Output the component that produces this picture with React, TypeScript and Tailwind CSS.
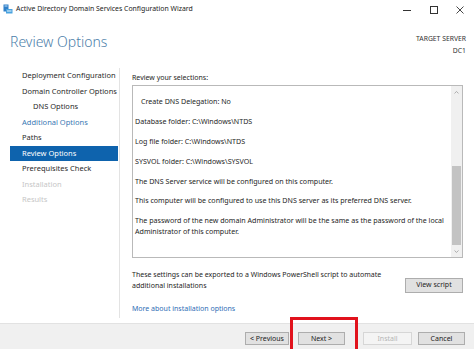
import React from "react";

const navItems = [
  { label: "Deployment Configuration", tone: "normal" },
  { label: "Domain Controller Options", tone: "normal" },
  { label: "DNS Options", tone: "normal", indent: true },
  { label: "Additional Options", tone: "link" },
  { label: "Paths", tone: "normal" },
  { label: "Review Options", tone: "active" },
  { label: "Prerequisites Check", tone: "normal" },
  { label: "Installation", tone: "disabled" },
  { label: "Results", tone: "disabled" },
];

const summary = [
  " Create DNS Delegation: No",
  "Database folder: C:\\Windows\\NTDS",
  "Log file folder: C:\\Windows\\NTDS",
  "SYSVOL folder: C:\\Windows\\SYSVOL",
  "The DNS Server service will be configured on this computer.",
  "This computer will be configured to use this DNS server as its preferred DNS server.",
  "The password of the new domain Administrator will be the same as the password of the local Administrator of this computer.",
];

function WizardIcon() {
  return (
    <svg width="10" height="10" viewBox="0 0 10 10">
      <rect x="0.5" y="0.5" width="5" height="7" fill="#2f7fc8" />
      <rect x="1.5" y="1.5" width="3" height="1" fill="#bfe0f7" />
      <rect x="3" y="5" width="6.5" height="4.5" fill="#4aa3df" />
      <rect x="4" y="6.5" width="4.5" height="1" fill="#e8f4fc" />
    </svg>
  );
}

function WinControls() {
  return (
    <div className="flex items-center h-full pr-[2px]">
      <div className="w-[27px] flex justify-center">
        <svg width="8" height="8" viewBox="0 0 8 8">
          <path d="M0 4.5h8" stroke="#333" strokeWidth="1" />
        </svg>
      </div>
      <div className="w-[28px] flex justify-center">
        <svg width="8" height="8" viewBox="0 0 8 8">
          <rect x="0.5" y="0.5" width="7" height="7" fill="none" stroke="#333" strokeWidth="1" />
        </svg>
      </div>
      <div className="w-[24px] flex justify-center">
        <svg width="8" height="8" viewBox="0 0 8 8">
          <path d="M0.5 0.5l7 7M7.5 0.5l-7 7" stroke="#333" strokeWidth="0.9" />
        </svg>
      </div>
    </div>
  );
}

function Btn({ label, disabled, className = "" }: { label: string; disabled?: boolean; className?: string }) {
  return (
    <div
      className={`h-[13px] flex items-center justify-center border text-[7px] leading-none ${
        disabled ? "border-[#d6d6d6] bg-[#f4f4f4] text-[#b4b4b4]" : "border-[#adadad] bg-[#e1e1e1] text-[#222]"
      } ${className}`}
    >
      {label}
    </div>
  );
}

export default function App() {
  return (
    <div
      className="relative w-[474px] h-[349px] bg-white overflow-hidden flex flex-col text-[#1e1e1e]"
      style={{ fontFamily: '"Noto Sans", "Open Sans", sans-serif' }}
    >
      {/* title bar */}
      <div className="h-[19px] flex items-center justify-between pl-[3px] pr-0">
        <div className="flex items-center gap-[3px]">
          <WizardIcon />
          <span className="text-[6.9px] text-[#222]">Active Directory Domain Services Configuration Wizard</span>
        </div>
        <WinControls />
      </div>

      {/* header */}
      <div className="h-[49px] flex justify-between pl-[10px] pr-[8px]">
        <div className="text-[14px] font-light text-[#4d80aa] pt-[13px] leading-[20px]">Review Options</div>
        <div className="pt-[14px] text-right text-[6.8px] leading-[12px] text-[#333]">
          <div>TARGET SERVER</div>
          <div>DC1</div>
        </div>
      </div>

      {/* main */}
      <div className="h-[255px] flex">
        <div className="w-[120px] border-r border-[#e3e3e3] pl-[10px] pr-[1px] mb-[5px]">
          {navItems.map((it) => (
            <div
              key={it.label}
              className={`h-[15.5px] flex items-center text-[7.5px] ${it.indent ? "pl-[23px]" : "pl-[12px]"} ${
                it.tone === "active"
                  ? "bg-[#0e63ad] text-white"
                  : it.tone === "link"
                  ? "text-[#3a78b4]"
                  : it.tone === "disabled"
                  ? "text-[#c6c6c6]"
                  : "text-[#2a2a2a]"
              }`}
            >
              {it.label}
            </div>
          ))}
        </div>

        <div className="flex-1 pl-[12px] pr-[11px] pt-[2px] flex flex-col">
          <div className="h-[12px] text-[7px] leading-[12px] mt-[2px]">Review your selections:</div>
          <div className="h-[173px] mt-[1px] border border-[#b9b9b9] flex">
            <div className="flex-1 pl-[2px] pt-[10px] text-[7.1px] leading-[10.5px] flex flex-col gap-[9.4px]">
              {summary.map((s) => (
                <div key={s} className={s.startsWith(" ") ? "pl-[6px]" : ""}>
                  {s.trim()}
                </div>
              ))}
            </div>
            <div className="w-[11px] bg-[#f0f0f0] flex flex-col items-center">
              <svg width="7" height="11" viewBox="0 0 7 11" className="mt-[1px]">
                <path d="M1.5 6.5l2-2 2 2" fill="none" stroke="#9a9a9a" strokeWidth="0.8" />
              </svg>
              <div className="mt-[68px] w-[9px] h-[80px] bg-[#c3c3c3]" />
              <svg width="7" height="11" viewBox="0 0 7 11" className="mt-[1px]">
                <path d="M1.5 4.5l2 2 2-2" fill="none" stroke="#9a9a9a" strokeWidth="0.8" />
              </svg>
            </div>
          </div>

          <div className="mt-[12px] flex items-end justify-between">
            <div className="text-[7px] leading-[10.5px]">
              These settings can be exported to a Windows PowerShell script to automate
              <br />
              additional installations
            </div>
            <div className="w-[58px] h-[15px] border border-[#adadad] bg-[#e1e1e1] flex items-center justify-center text-[7px] mb-[-2px]">
              View script
            </div>
          </div>

          <div className="mt-[13px] text-[7px] text-[#2f6db5]">More about installation options</div>
        </div>
      </div>

      {/* footer */}
      <div className="flex-1 bg-[#f0f0f0] border-t border-[#e2e2e2] flex items-start pt-[8px] pl-[245px]">
        <Btn label="< Previous" className="w-[44px]" />
        <Btn label="Next >" className="w-[47px] ml-[9px]" />
        <Btn label="Install" disabled className="w-[49px] ml-[18px]" />
        <Btn label="Cancel" className="w-[47px] ml-[6px]" />
      </div>

      {/* red highlight */}
      <div className="absolute left-[290px] top-[317px] w-[68px] h-[40px] border-[3px] border-[#e1121c]" />
    </div>
  );
}
